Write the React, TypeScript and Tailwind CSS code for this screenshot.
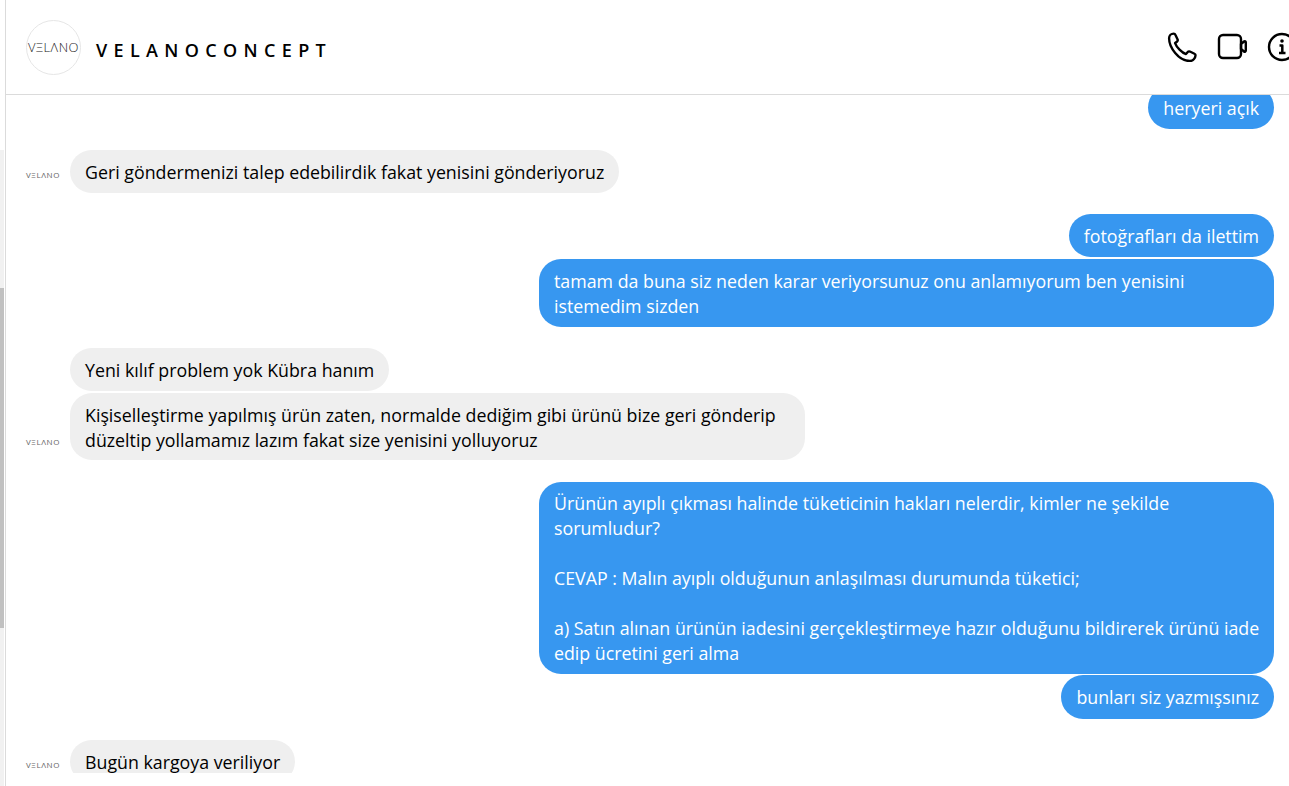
import React from "react";

function Logo({ small }: { small?: boolean }) {
    return (
        <span
            aria-label="VELANO"
            className={
                small
                    ? "text-[8px] leading-none tracking-[0.6px] text-[#666]"
                    : "text-[13px] leading-none tracking-[0.5px] text-[#222] font-light"
            }
        >
            VΞLΛNO
        </span>
    );
}

function Sent({ children, className = "", pad = "pt-[10px] pb-[8px]" }: { children: React.ReactNode; className?: string; pad?: string }) {
    return (
        <div className={"flex justify-end " + className}>
            <div className={"max-w-[735px] w-fit bg-[#3797f0] text-white px-[15px] rounded-[22px] whitespace-pre-line " + pad}>
                {children}
            </div>
        </div>
    );
}

function Received({ children, logo, className = "", pad = "pt-[10px] pb-[8px]" }: { children: React.ReactNode; logo?: boolean; className?: string; pad?: string }) {
    return (
        <div className={"flex items-end " + className}>
            <div className="w-[64px] pl-[20px] pb-[14px] shrink-0 flex">{logo && <Logo small />}</div>
            <div className={"max-w-[735px] w-fit bg-[#efefef] text-black px-[15px] rounded-[22px] " + pad}>{children}</div>
        </div>
    );
}

export default function App() {
    return (
        <div className="h-[786px] w-full overflow-hidden bg-white flex font-['Open_Sans',sans-serif] text-[17.8px] leading-[25px]">
            <div className="w-[6px] shrink-0 border-r border-[#dbdbdb] flex flex-col">
                <div className="h-[150px]" />
                <div className="w-[4px] h-[138px] bg-[#f1f1f1]" />
                <div className="w-[4px] h-[340px] bg-[#c1c1c1]" />
                <div className="w-[4px] flex-1 bg-[#f1f1f1]" />
            </div>
            <div className="flex-1 min-w-0 flex flex-col">
                <header className="h-[95px] shrink-0 border-b border-[#dbdbdb] flex items-center pl-[20px] overflow-hidden">
                    <div className="w-[55px] h-[55px] rounded-full border border-[#e6e6e6] flex items-center justify-center shrink-0">
                        <Logo />
                    </div>
                    <div className="ml-[15px] mt-[7px] text-[18px] font-semibold tracking-[6.35px] text-black">VELANOCONCEPT</div>
                    <div className="ml-auto flex items-center gap-[20px] shrink-0 -mr-[8px]">
                        <svg width="30" height="30" viewBox="1.5 1 21.5 21.5" fill="none" stroke="black" strokeWidth="1.7" strokeLinecap="round" strokeLinejoin="round">
                            <path d="M3 5.5C3 3.5 4.5 2.2 6.3 2.2c.6 0 1 .3 1.2.8l1.6 3.4c.2.5.1 1-.3 1.4L7.3 8.9c1 2.9 4.9 7 7.8 7.9l1.3-1.5c.4-.4 1-.5 1.5-.3l3.3 1.6c.5.2.8.7.7 1.3-.1 1.9-1.7 3.9-4 3.9C9.7 21.8 3 12 3 5.5z" />
                        </svg>
                        <svg width="30" height="30" viewBox="0 0 30 30" fill="none" stroke="black" strokeWidth="2.4" strokeLinecap="round" strokeLinejoin="round">
                            <rect x="2" y="3" width="22" height="23" rx="4" />
                            <path d="M24 12l3-2.5c.8-.6 1.800-.1 1.800.9v8.200c0 1-1 1.500-1.800.9L24 17z" />
                        </svg>
                        <svg width="30" height="30" viewBox="0 0 30 30" fill="none" stroke="black" strokeWidth="2.4" strokeLinecap="round" strokeLinejoin="round">
                            <circle cx="15" cy="15" r="13" />
                            <path d="M12.500 13.500h2.800v7.500M12 21h6.500" strokeWidth="2.5" strokeLinecap="butt" />
                            <circle cx="15" cy="9" r="1.800" fill="black" stroke="none" />
                        </svg>
                    </div>
                </header>
                <main className="h-[678px] overflow-hidden pr-[15px] flex flex-col">
                    <Sent className="-mt-[9px]">heryeri açık</Sent>
                    <Received logo className="mt-[21px]">Geri göndermenizi talep edebilirdik fakat yenisini gönderiyoruz</Received>
                    <Sent className="mt-[21px]">fotoğrafları da ilettim</Sent>
                    <Sent className="mt-[2px]">tamam da buna siz neden karar veriyorsunuz onu anlamıyorum ben yenisini istemedim sizden</Sent>
                    <Received className="mt-[21px]">Yeni kılıf problem yok Kübra hanım</Received>
                    <Received logo className="mt-[2px]" pad="pt-[10px] pb-[7px]">
                        Kişiselleştirme yapılmış ürün zaten, normalde dediğim gibi ürünü bize geri gönderip düzeltip yollamamız lazım fakat size yenisini yolluyoruz
                    </Received>
                    <Sent className="mt-[22px]" pad="pt-[9px] pb-[8px]">
                        {"Ürünün ayıplı çıkması halinde tüketicinin hakları nelerdir, kimler ne şekilde sorumludur?\n\nCEVAP : Malın ayıplı olduğunun anlaşılması durumunda tüketici;\n\n"}
                        <span className="whitespace-nowrap">a) Satın alınan ürünün iadesini gerçekleştirmeye hazır olduğunu bildirerek ürünü iade</span>
                        {"\nedip ücretini geri alma"}
                    </Sent>
                    <Sent className="mt-[1px]" pad="pt-[10px] pb-[9px]">bunları siz yazmışsınız</Sent>
                    <Received logo className="mt-[21px]">Bugün kargoya veriliyor</Received>
                </main>
            </div>
        </div>
    );
}
